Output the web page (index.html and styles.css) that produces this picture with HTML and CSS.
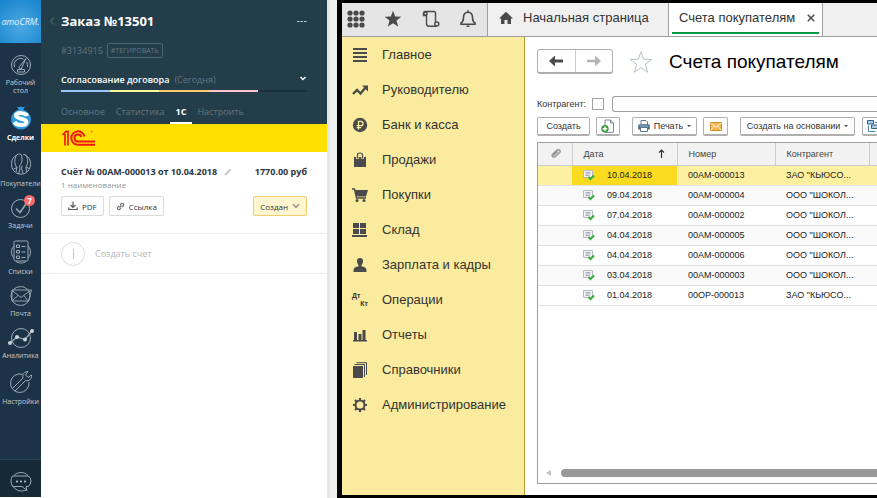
FILE: index.html
```html
<!DOCTYPE html>
<html lang="ru">
<head>
<meta charset="utf-8">
<title>Заказ №13501</title>
<link rel="stylesheet" href="styles.css">
</head>
<body>
<svg class="sprite" aria-hidden="true">
  <symbol id="doc" viewBox="0 0 12 12">
    <path d="M.5 1.500h9v7h-9z" fill="#f1f3f5" stroke="#b4bbc2"/>
    <path d="M2.500 3.500h5M2.500 5h5M2.500 6.500h4" stroke="#98a1aa" stroke-width=".8" fill="none"/>
    <path d="M5.500 8l2 2 3.500-3.500" stroke="#3aae3f" stroke-width="2.200" fill="none"/>
  </symbol>
</svg>
<div class="crm">
  <nav class="rail">
    <a class="logo" href="#">amo<i>CRM.</i></a>
    <div class="rail-items">
      <a class="rail-item" href="#">
        <svg width="22" height="22" viewBox="0 0 22 22"><circle cx="11" cy="11" r="9.500"/><path d="M4.500 13a6.500 6.500 0 0 1 9-8M17.500 13a6.500 6.500 0 0 0-.8-5M10 12l6-7.500M10 12a1.500 1.500 0 1 0 2 1l4-8.500M7.500 15.500h7v2.500h-7z"/></svg>
        <span>Рабочий<br>стол</span>
      </a>
      <a class="rail-item tall active" href="#">
        <svg width="24" height="26" viewBox="0 0 24 26"><path d="M8 1.500q2 1.200 4 0 2 1.200 4 0l-2 4h-4z" fill="#2f9bdc" stroke="none"/><circle cx="12" cy="14.500" r="10" fill="#2f9bdc" stroke="none"/><path d="M18 11c-1-3.500-10.500-4-11-.5-.4 3.500 10.500 3 10.500 6.500 0 4-10 4-12 0" stroke="#fff" stroke-width="4"/></svg>
        <span>Сделки</span>
      </a>
      <a class="rail-item tall" href="#">
        <svg width="22" height="26" viewBox="0 0 22 26"><path d="M7 16.500c-2-2-2.500-5-2-8C5.500 4.500 7.500 2.500 10 3c2 .5 2 3 2 6 0 3-1 4-2.500 5.500L10 18l-1.500 5M13 3.500c2.500-.5 4 1.500 4.500 5 .4 3-.2 5.500-1.500 7.500M12 14.500l-.5 3 1.500 5"/><path d="M3.500 18l3.500-1.500M16 16l3 1.500M7.500 3.700a10 10 0 0 0-6 9.500c0 5 3.500 10 9.500 10s9.500-5 9.500-10a10 10 0 0 0-6-9.500M7 16.500L6 21M16 16l.5 5"/></svg>
        <span>Покупатели</span>
      </a>
      <a class="rail-item" href="#">
        <svg width="22" height="22" viewBox="0 0 22 22"><circle cx="10.500" cy="11.500" r="9"/><path d="M6 11.500l4 4 6-8.500" stroke-width="1.500"/></svg>
        <b class="badge">7</b>
        <span>Задачи</span>
      </a>
      <a class="rail-item tall" href="#">
        <svg width="22" height="26" viewBox="0 0 22 26"><path d="M4 3.500q0-1.500 1.500-1.500h11q1.500 0 1.500 1.500v17q0 1.500-1.500 1.500h-11Q4 22 4 20.500zM4 7C.5 11 .5 15 4 19M18 7c3.500 4 3.500 8 0 12M6 22.500c3 2 7 2 10 0M6.500 6h3v2.500h-3zM6.500 11.500h3V14h-3zM6.500 17h3v2.500h-3zM11.500 7.500h4M11.500 13h4M11.500 18.500h4"/></svg>
        <span>Списки</span>
      </a>
      <a class="rail-item" href="#">
        <svg width="24" height="22" viewBox="0 0 24 22"><circle cx="11.500" cy="11" r="9.500"/><path d="M3 5h19.500l-3 11H3zM3 5.500l9 7 9.500-7M3 16l6-5.500M19 16l-4-5.500" stroke-width=".9"/></svg>
        <span>Почта</span>
      </a>
      <a class="rail-item" href="#">
        <svg width="28" height="22" viewBox="0 0 28 22"><circle cx="14" cy="11" r="9.500"/><path d="M3 16l7-6 8 2.500 7-8.500" stroke-width="1.300"/><g fill="#ccd3d8" stroke="none"><circle cx="3" cy="16" r="2"/><circle cx="10" cy="10" r="2"/><circle cx="18" cy="12.500" r="2"/><circle cx="25" cy="4" r="2"/></g></svg>
        <span>Аналитика</span>
      </a>
      <a class="rail-item tall" href="#">
        <svg width="24" height="26" viewBox="0 0 24 26"><path d="M13.500 5.300A9.300 9.300 0 1 0 20 13M4 19L14 9c-1-4 1.500-6.500 5-6.500L16.500 6l2.500 2.500L22.500 6c.5 4-2.500 6.500-6 5.500L6 22"/></svg>
        <span>Настройки</span>
      </a>
    </div>
    <a class="chat" href="#" aria-label="Чат">
      <svg width="24" height="22" viewBox="0 0 24 22"><path d="M3.500 5h16q2.500 2 2.500 5t-2.500 5.500H17l1 4-5-4H3.500Q2 13 2 10t1.500-5zM5 4.500C9 .5 15 .5 19 4.500M4.500 16c3 4 8 5 12.500 3"/><g fill="#ccd3d8" stroke="none"><circle cx="8" cy="10.500" r="1"/><circle cx="12" cy="10.500" r="1"/><circle cx="16" cy="10.500" r="1"/></g></svg>
    </a>
  </nav>

  <section class="deal">
    <header class="deal-head">
      <div class="deal-title">
        <a class="back" href="#" aria-label="Назад"><svg width="6" height="8" viewBox="0 0 6 8"><path d="M5 .5L1.500 4 5 7.500" fill="none" stroke="#65767f"/></svg></a>
        <h1>Заказ №13501</h1>
        <button class="dots" aria-label="Ещё"><svg width="10" height="2" viewBox="0 0 10 2"><path d="M0 1.500h2.500M3.500 1.500H6M7 1.500h2.500" stroke="#c9d1d5"/></svg></button>
      </div>
      <div class="tags"><span>#3134915</span><button>#ТЕГИРОВАТЬ</button></div>
      <div class="stage"><b>Согласование договора</b><span>(Сегодня)</span><svg width="8" height="6" viewBox="0 0 8 6"><path d="M1.500 1L4 3.500 6.500 1" fill="none" stroke="#fff" stroke-width="1.500"/></svg></div>
      <div class="progress"><i class="blue"></i><i class="lemon"></i><i class="orange"></i><i class="pink"></i><i></i></div>
      <nav class="tabs"><a href="#">Основное</a><a href="#">Статистика</a><a class="current" href="#">1С</a><a href="#">Настроить</a></nav>
    </header>
    <div class="brand">
      <svg width="36" height="18" viewBox="0 0 36 18" role="img" aria-label="1С">
        <path d="M1.500 6L5 2.300h2V16.500M4 5v11.500" fill="none" stroke="#f01818" stroke-width="1.700"/>
        <path d="M23.500 7.500A6.700 6.700 0 1 0 17 15.700h17M20.300 8A3.500 3.500 0 1 0 17 12.500h17" fill="none" stroke="#f01818" stroke-width="2"/>
        <circle cx="30.500" cy="2.500" r="1" fill="#f08010"/>
      </svg>
    </div>
    <article class="invoice">
      <div class="invoice-top">
        <b>Счёт № 00АМ-000013 от 10.04.2018</b>
        <svg width="8" height="8" viewBox="0 0 8 8"><path d="M1 7l5.500-5.500" stroke="#c8c8c8" stroke-width="2"/></svg>
        <b class="sum">1770.00 руб</b>
      </div>
      <div class="count">1 наименование</div>
      <div class="invoice-actions">
        <button><svg width="10" height="10" viewBox="0 0 10 10"><path d="M5 .5V6M2.500 4L5 6.500 7.500 4M.8 6.500v2h8.400v-2" fill="none" stroke="#555b60" stroke-width="1.200"/></svg>PDF</button>
        <button><svg width="9" height="9" viewBox="0 0 9 9"><path d="M3.500 5.500l2-2M4 3l1.500-1.500a1.500 1.500 0 0 1 2 2L6 5M3 4L1.500 5.500a1.500 1.500 0 0 0 2 2L5 6" fill="none" stroke="#777" stroke-width="1.200"/></svg>Ссылка</button>
        <button class="status">Создан<svg width="8" height="6" viewBox="0 0 8 6"><path d="M1 1l3 3.500L7 1" fill="none" stroke="#8c8c80" stroke-width="1.200"/></svg></button>
      </div>
    </article>
    <button class="add"><svg width="24" height="24" viewBox="0 0 24 24"><circle cx="12" cy="12" r="11.500" fill="none" stroke="#dcdcdc"/><path d="M12.500 7v10" stroke="#c4c4c4"/></svg>Создать счет</button>
  </section>
</div>
<div class="gutter"></div>

<div class="app">
  <div class="topbar">
    <div class="tools">
      <button aria-label="Меню"><svg width="18" height="18" viewBox="0 0 18 18" fill="#4a4a4a"><g id="r"><circle cx="3" cy="3" r="2.600"/><circle cx="9" cy="3" r="2.600"/><circle cx="15" cy="3" r="2.600"/></g><use href="#r" y="6"/><use href="#r" y="12"/></svg></button>
      <button aria-label="Избранное"><svg width="18" height="18" viewBox="0 0 18 18"><path d="M9 .8l2.200 5.800 6.100.2-4.800 3.800 1.700 6L9 13.200l-5.200 3.400 1.700-6L.7 6.800l6.100-.2z" fill="#4a4a4a"/></svg></button>
      <button aria-label="История"><svg width="18" height="18" viewBox="0 0 18 18" fill="none" stroke="#4a4a4a" stroke-width="1.400"><path d="M4.500 5.500h-3q-.7-4 2-4h8.500q1.500 0 1.500 2v8.500M4.500 4v9.500q0 2.700 2.500 2.700h7.500"/><circle cx="3.500" cy="3.700" r="1.600"/><circle cx="14.800" cy="14" r="2"/></svg></button>
      <button aria-label="Уведомления"><svg width="18" height="18" viewBox="0 0 18 18" fill="none" stroke="#4a4a4a" stroke-width="1.600"><path d="M9 2.200c-3.500 0-4.500 2.600-4.500 5.300 0 3-.7 4.500-2.500 5.500v1.200h14V13c-1.800-1-2.500-2.500-2.500-5.500 0-2.700-1-5.300-4.500-5.300zM9 .3v2M7.500 16.200h3"/></svg></button>
    </div>
    <a class="tab home" href="#"><svg width="14" height="14" viewBox="0 0 14 14"><path d="M7 .7l7 6.800h-2V13H8.500V9h-3v4H2V7.500H0z" fill="#4a4a4a"/></svg>Начальная страница</a>
    <div class="tab open"><span>Счета покупателям</span><button aria-label="Закрыть"><svg width="8" height="8" viewBox="0 0 8 8"><path d="M.8.8l6.400 6.400M7.200.8L.8 7.200" stroke="#505050" stroke-width="1.600"/></svg></button></div>
  </div>
  <div class="work">
    <nav class="sections">
      <a href="#"><svg viewBox="0 0 16 16"><path d="M1 2h14M1 6h14M1 10h14M1 14h14" stroke="#4a4a4a" stroke-width="2"/></svg>Главное</a>
      <a href="#"><svg viewBox="0 0 16 16"><path d="M1 12l4-4 3.500 3.500L14 5" fill="none" stroke="#4a4a4a" stroke-width="2.300"/><path d="M10 3.500h6v6z" fill="#4a4a4a"/></svg>Руководителю</a>
      <a href="#"><svg viewBox="0 0 16 16"><circle cx="8" cy="8" r="7.200" fill="#4a4a4a"/><path d="M6.500 12.500V4.300h2.300a2.200 2.200 0 0 1 0 4.400H4.700M4.700 10.700h4.600" fill="none" stroke="#faeb9e" stroke-width="1.300"/></svg>Банк и касса</a>
      <a href="#"><svg viewBox="0 0 16 16"><path d="M2 5h12v10H2z" fill="#4a4a4a"/><path d="M5.500 7V3q0-2 2.500-2t2.500 2v4" fill="none" stroke="#faeb9e" stroke-width="2.600"/><path d="M5.500 6.500V3q0-2 2.500-2t2.500 2v3.500" fill="none" stroke="#4a4a4a" stroke-width="1.200"/></svg>Продажи</a>
      <a href="#"><svg viewBox="0 0 16 16"><path d="M0 2h2.500l2 9H14" fill="none" stroke="#4a4a4a" stroke-width="1.400"/><path d="M2.800 3H16l-2 6.500H4.500z" fill="#4a4a4a"/><circle cx="5" cy="13.500" r="1.500" fill="#4a4a4a"/><circle cx="12" cy="13.500" r="1.500" fill="#4a4a4a"/></svg>Покупки</a>
      <a href="#"><svg viewBox="0 0 16 16"><path d="M1 1h6v5H1zM8 1h6v5H8zM1 7h6v5H1zM8 7h6v5H8zM0 13h15v2H0z" fill="#4a4a4a"/></svg>Склад</a>
      <a href="#"><svg viewBox="0 0 16 16"><path d="M8 1c2.300 0 3.200 1.600 3 3.500-.2 1.700-.8 2.800-1.500 3.500v1.200c3 .6 5 1.500 5 4.300v1.500h-13v-1.500c0-2.800 2-3.700 5-4.300V8C5.800 7.300 5.200 6.200 5 4.500 4.800 2.600 5.700 1 8 1z" fill="#4a4a4a"/></svg>Зарплата и кадры</a>
      <a href="#"><span class="dtkt"><b>Дт</b><b>Кт</b></span>Операции</a>
      <a href="#"><svg viewBox="0 0 16 16"><path d="M1 13h14v1.500H1zM2 5h3v8H2zM6.500 7h3v6h-3zM10.500 3h3v10h-3z" fill="#4a4a4a"/></svg>Отчеты</a>
      <a href="#"><svg viewBox="0 0 16 16"><path d="M1 4h10v12H1z" fill="#4a4a4a"/><path d="M2.500 2.500H12.500V15M4.500.7H14.500V13" fill="none" stroke="#4a4a4a"/></svg>Справочники</a>
      <a href="#"><svg viewBox="0 0 16 16"><circle cx="8" cy="8" r="4.500" fill="none" stroke="#4a4a4a" stroke-width="2"/><path d="M8 1v2.500M8 12.500V15M1 8h2.500M12.500 8H15M3 3l1.800 1.800M11.200 11.200L13 13M3 13l1.800-1.800M11.200 4.800L13 3" stroke="#4a4a4a" stroke-width="2"/></svg>Администрирование</a>
    </nav>
    <main class="page">
      <div class="page-head">
        <div class="history">
          <button aria-label="Назад"><svg width="14" height="12" viewBox="0 0 14 12"><path d="M0 6l6-5.500v4h8v3H6v4z" fill="#4a4a4a"/></svg></button>
          <button aria-label="Вперед"><svg width="14" height="12" viewBox="0 0 14 12"><path d="M14 6L8 .5v4.300H0v2.400h8v4.300z" fill="#b4b4b4"/></svg></button>
        </div>
        <svg class="fav" width="24" height="24" viewBox="0 0 24 24"><path d="M12 1.500l2.700 7.800 8 .2-6.400 4.900 2.300 7.800-6.600-4.600-6.600 4.600 2.300-7.800L1.300 9.500l8-.2z" fill="#fff" stroke="#b9c2cb"/></svg>
        <h2>Счета покупателям</h2>
      </div>
      <div class="filter">
        <label for="use">Контрагент:</label>
        <input type="checkbox" id="use">
        <input type="text" aria-label="Контрагент">
      </div>
      <div class="commands">
        <button class="create">Создать</button>
        <button class="copy" aria-label="Скопировать"><svg width="14" height="14" viewBox="0 0 14 14"><path d="M4 1h5.500L12.500 4v9.300H4z" fill="#fff" stroke="#7a8894"/><path d="M9.500 1v3h3" fill="none" stroke="#7a8894"/><circle cx="4" cy="9.700" r="3.700" fill="#3a9e3e"/><path d="M4 7.500v4.400M1.800 9.700h4.400" stroke="#fff" stroke-width="1.400"/></svg></button>
        <button class="print"><svg width="12" height="12" viewBox="0 0 12 12"><path d="M3 .5h5l1.500 1.500v3H3z" fill="#fff" stroke="#60788c"/><path d="M.3 4.500h11.400v5H.3z" fill="#3c6480"/><path d="M2.500 7.500h7v4h-7z" fill="#fff" stroke="#60788c"/><path d="M1.500 6h9" stroke="#a8c4d8"/></svg>Печать<i class="caret"></i></button>
        <button class="mail" aria-label="Почта"><svg width="12" height="9" viewBox="0 0 12 9"><path d="M.5.5h11v8H.5z" fill="#f3b650" stroke="#cf8d2b"/><path d="M.5.8L6 5 11.500.8M.8 8.200L4.500 4M11.200 8.200L7.500 4" fill="none" stroke="#fff0d0"/></svg></button>
        <button class="base">Создать на основании<i class="caret"></i></button>
        <button class="links" aria-label="Связанные документы"><svg width="18" height="13" viewBox="0 0 18 13"><path d="M.5.5h6v3.500h-6zM4.500 5h6v3.500h-6zM10.500 9h6v3.500h-6z" fill="#a9cdea" stroke="#31648c"/><path d="M8 2.500h3.500V4M1.500 5.500v6h7" fill="none" stroke="#4a86b4"/></svg></button>
      </div>
      <div class="list">
        <table>
          <colgroup><col class="c-clip"><col class="c-date"><col class="c-num"><col class="c-agent"><col></colgroup>
          <thead><tr>
            <th class="clip"><svg width="10" height="9" viewBox="0 0 10 9"><path d="M2.500 6.500l4-4M1.500 5.500L5 2q2-2 3.500-.8T8 4L4.500 7.500Q3 8.500 1.800 7.600T1.500 5.500" fill="none" stroke="#969696" stroke-width="1.500"/></svg></th>
            <th class="date"><div>Дата<svg width="7" height="9" viewBox="0 0 7 9"><path d="M3.500 9V1M1 3.500L3.500 1 6 3.500" fill="none" stroke="#333" stroke-width="1.200"/></svg></div></th>
            <th>Номер</th><th>Контрагент</th><th></th>
          </tr></thead>
          <tbody>
            <tr class="sel"><td></td><td class="d"><svg><use href="#doc"/></svg>10.04.2018</td><td>00АМ-000013</td><td>ЗАО "КЬЮСО...</td><td></td></tr>
            <tr><td></td><td class="d"><svg><use href="#doc"/></svg>09.04.2018</td><td>00АМ-000004</td><td>ООО "ШОКОЛ...</td><td></td></tr>
            <tr><td></td><td class="d"><svg><use href="#doc"/></svg>07.04.2018</td><td>00АМ-000002</td><td>ООО "ШОКОЛ...</td><td></td></tr>
            <tr><td></td><td class="d"><svg><use href="#doc"/></svg>04.04.2018</td><td>00АМ-000005</td><td>ООО "ШОКОЛ...</td><td></td></tr>
            <tr><td></td><td class="d"><svg><use href="#doc"/></svg>04.04.2018</td><td>00АМ-000006</td><td>ООО "ШОКОЛ...</td><td></td></tr>
            <tr><td></td><td class="d"><svg><use href="#doc"/></svg>03.04.2018</td><td>00АМ-000003</td><td>ООО "ШОКОЛ...</td><td></td></tr>
            <tr><td></td><td class="d"><svg><use href="#doc"/></svg>01.04.2018</td><td>00ОР-000013</td><td>ЗАО "КЬЮСО...</td><td></td></tr>
          </tbody>
        </table>
        <div class="hscroll"><svg width="5" height="6" viewBox="0 0 5 6"><path d="M5 0v6L0 3z" fill="#c4c4c4"/></svg><i></i></div>
      </div>
    </main>
  </div>
</div>
</body>
</html>
```
FILE: styles.css
```css
* { box-sizing: border-box; }
body {
  margin: 0;
  min-height: 100vh;
  display: flex;
  background: #fff;
  font-family: "Liberation Sans", Arial, sans-serif;
  overflow: hidden;
}
.sprite { display: none; }
a { color: inherit; text-decoration: none; }
button { font: inherit; color: inherit; margin: 0; padding: 0; border: 0; background: none; }
svg { flex: none; display: block; }
h1, h2 { margin: 0; }

/* CRM side */
.crm {
  flex: none;
  display: flex;
  padding-bottom: 1px;
  font-family: "Open Sans", "Noto Sans", sans-serif;
}
.rail {
  width: 41px;
  display: flex;
  flex-direction: column;
  background: #1c3347;
  color: #c3ccd3;
}
.logo {
  height: 43px;
  display: flex;
  align-items: center;
  justify-content: center;
  background: radial-gradient(circle at 50% 60%, #4da9e2, #1583cd);
  color: #e8f6ff;
  font-size: 9px;
  font-style: italic;
  overflow: hidden;
}
.rail-items {
  flex: 1;
  display: flex;
  flex-direction: column;
  gap: 9px;
  padding-top: 11px;
}
.rail-item {
  position: relative;
  display: flex;
  flex-direction: column;
  align-items: center;
  gap: 3px;
  font-size: 7px;
  line-height: 8px;
  text-align: center;
  white-space: nowrap;
}
.rail-item:first-child { margin-bottom: 1px; }
.rail-item svg, .chat svg { fill: none; stroke: #9dabb5; stroke-width: 1; }
.rail-item.active { color: #fff; font-weight: 700; }
.badge {
  position: absolute;
  top: -2px;
  right: 6px;
  width: 11px;
  height: 11px;
  border-radius: 50%;
  background: #f96a6a;
  color: #fff;
  font-size: 8px;
  line-height: 11px;
}
.chat {
  height: 38px;
  display: flex;
  justify-content: center;
  align-items: center;
  padding-top: 6px;
  border-top: 1px solid #27475f;
  background: #162936;
}

.deal { width: 286px; background: #fff; white-space: nowrap; }
.deal-head {
  height: 124px;
  display: flex;
  flex-direction: column;
  padding: 12px 20px 0;
  background: #233d4a;
  color: #65767f;
}
.deal-title { display: flex; align-items: center; height: 18px; }
.back { width: 12px; margin-left: -12px; }
.deal-title h1 { flex: 1; color: #fff; font-size: 13px; line-height: 18px; font-weight: 700; }
.tags {
  display: flex;
  align-items: center;
  gap: 4px;
  margin-top: 13px;
  font-size: 9px;
  line-height: 15px;
}
.tags button {
  width: 56px;
  height: 15px;
  border: 1px solid #50646f;
  border-radius: 2px;
  font-size: 7px;
  line-height: 13px;
}
.stage {
  display: flex;
  align-items: center;
  gap: 5px;
  margin-top: 14px;
  font-size: 9px;
  line-height: 15px;
}
.stage b { color: #fff; font-weight: 600; }
.stage svg { margin-left: auto; margin-bottom: 2px; }
.progress { display: flex; margin-top: 3px; }
.progress i { flex: 1; height: 2px; background: #17303c; }
.progress .blue { background: #98c8ff; }
.progress .lemon { background: #fff59a; }
.progress .orange { background: #ffc86d; }
.progress .pink { background: #ffc5cd; }
.tabs { display: flex; gap: 11px; margin-top: auto; font-size: 9px; line-height: 15px; }
.tabs a { padding: 0 0 3px; border-bottom: 2px solid transparent; }
.tabs .current { margin: 0 -6px; padding: 0 6px 3px; border-color: #fff; color: #fff; font-weight: 700; }
.brand { height: 28px; padding: 5px 20px; background: #ffe000; }

.invoice { padding: 13px 20px 17px; border-bottom: 1px solid #eee; color: #2e3640; font-size: 8px; }
.invoice-top { display: flex; align-items: center; gap: 7px; font-size: 9px; line-height: 14px; }
.sum { margin-left: auto; }
.count { color: #92989b; line-height: 12px; }
.invoice-actions { display: flex; gap: 5px; margin-top: 5px; }
.invoice-actions button {
  display: flex;
  align-items: center;
  gap: 4px;
  height: 20px;
  padding: 0 6px;
  border: 1px solid #d9dbdd;
  border-radius: 2px;
}
.invoice-actions .status { margin-left: auto; background: #fff6d0; border-color: #f1cc70; }
.add {
  width: 100%;
  height: 40px;
  display: flex;
  align-items: center;
  gap: 10px;
  padding: 0 20px;
  border-bottom: 1px solid #eee;
  color: #b5b9bb;
  font-size: 9px;
}
.gutter { flex: none; width: 10px; background: #f0f1f3; border-left: 3px solid #e6e6e6; }

/* Accounting window */
.app {
  flex: 1;
  min-width: 0;
  display: flex;
  flex-direction: column;
  border: solid #000;
  border-width: 3px 0 3px 5px;
}
.topbar { display: flex; height: 34px; background: #f0f0f0; border-bottom: 1px solid #a0a0a0; color: #333; font-size: 13px; }
.tools { width: 146px; display: flex; align-items: center; justify-content: space-between; padding: 0 10px 2px 5px; background: #e5e5e5; border-right: 1px solid #a0a0a0; }
.tab { display: flex; align-items: center; padding-bottom: 4px; border-right: 1px solid #a0a0a0; white-space: nowrap; }
.home { width: 181px; gap: 10px; padding-left: 11px; }
.open { width: 154px; justify-content: space-between; padding-left: 10px; padding-right: 7px; background: #fff; position: relative; }
.open::after { content: ""; position: absolute; left: 3px; right: 3px; bottom: 2px; height: 2px; background: #009646; }
.work { flex: 1; display: flex; min-height: 0; }
.sections { flex: none; width: 183px; background: #faeb9e; border-right: 1px solid #b5a12f; color: #333; font-size: 13px; }
.sections a { display: flex; align-items: center; gap: 14px; height: 35px; padding-left: 10px; }
.sections svg, .dtkt { width: 16px; height: 16px; flex: none; }
.dtkt { font-size: 7px; line-height: 8px; display: flex; flex-direction: column; }
.dtkt b:last-child { align-self: flex-end; }

.page { flex: 1; min-width: 0; display: flex; flex-direction: column; padding: 12px 0 11px 12px; background: #fff; color: #333; font-size: 9px; overflow: hidden; }
.page-head { display: flex; align-items: center; height: 25px; }
.history { display: flex; width: 76px; height: 25px; border: 1px solid #b0b0b0; border-bottom-width: 2px; border-radius: 3px; }
.history button { flex: 1; display: flex; align-items: center; justify-content: center; }
.history button + button { border-left: 1px solid #ccc; }
.fav { margin: 0 16px; }
.page-head h2 { color: #000; font-size: 19px; font-weight: 400; white-space: nowrap; }
.filter { display: flex; align-items: center; height: 16px; margin-top: 22px; }
.filter label { width: 55px; white-space: nowrap; }
.filter input[type=checkbox] { appearance: none; width: 12px; height: 12px; margin: 0 8px 0 0; border: 1px solid #a0a0a0; background: #fff; }
.filter input[type=text] { flex: 1; min-width: 0; height: 16px; padding: 0 4px; border: 1px solid #a0a0a0; border-right: 0; border-radius: 3px 0 0 3px; }
.commands { display: flex; height: 19px; margin: 5px 0 6px; white-space: nowrap; }
.commands button { flex: none; display: flex; align-items: center; justify-content: center; gap: 4px; border: 1px solid #b0b0b0; border-bottom-width: 2px; border-radius: 2px; background: #fff; }
.create { width: 53px; margin-right: 6px; }
.copy { width: 24px; margin-right: 12px; }
.print { width: 65px; margin-right: 6px; }
.mail { width: 25px; margin-right: 12px; }
.base { width: 115px; margin-right: 7px; }
.links { width: 28px; }
.caret { border: 2px solid transparent; border-top-color: #444; border-bottom: 0; }

.list { flex: 1; display: flex; flex-direction: column; border: 1px solid #a0a0a0; border-right: 0; }
table { width: 100%; table-layout: fixed; border-collapse: collapse; }
.c-clip { width: 34px; }
.c-date { width: 105px; }
.c-num { width: 98px; }
.c-agent { width: 94px; }
th, td { padding: 0 0 0 11px; text-align: left; white-space: nowrap; }
th { height: 22px; font-weight: 400; font-size: 9px; color: #444; background: #f2f2f2; border-right: 1px solid #ccc; border-bottom: 1px solid #ccc; }
th:last-child { border-right: 0; }
.clip svg { margin-left: 2px; }
.date div { display: flex; justify-content: space-between; align-items: center; padding-right: 12px; }
td { height: 20px; font-size: 9px; color: #222; border-bottom: 1px solid #e2e2e2; }
tr:nth-child(even) td { background: #fafafa; }
tr.sel td { background: #fdf0a0; }
tr.sel td.d { background: #fbdb1f; }
td svg { display: inline-block; width: 12px; height: 12px; margin-right: 12px; vertical-align: -3px; }
.hscroll { display: flex; align-items: center; gap: 10px; margin-top: auto; padding: 0 0 6px 8px; }
.hscroll i { flex: 1; height: 8px; border-radius: 4px 0 0 4px; background: #999; }
```
